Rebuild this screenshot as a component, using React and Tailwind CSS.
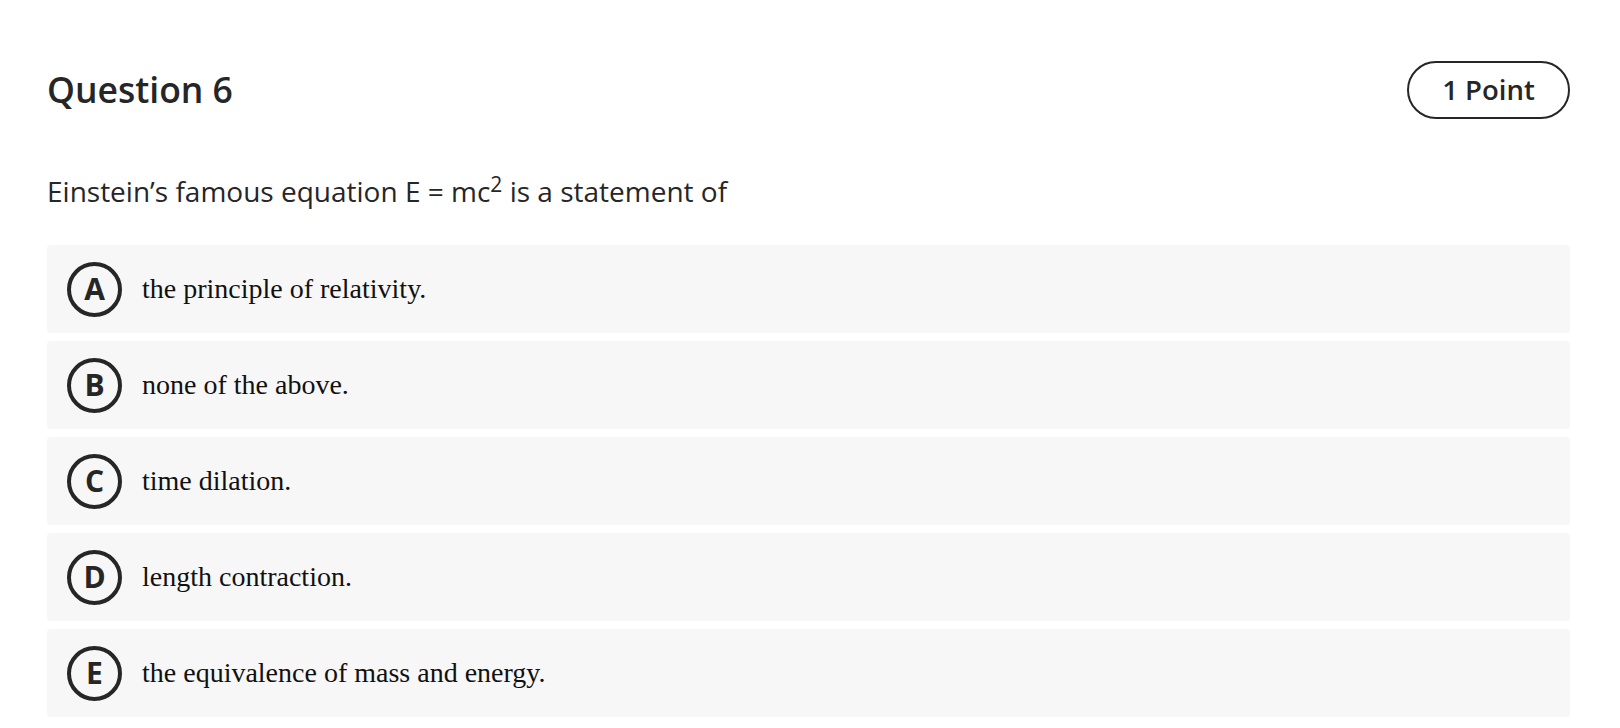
import React from 'react';

const options = [
  { letter: 'A', text: 'the principle of relativity.' },
  { letter: 'B', text: 'none of the above.' },
  { letter: 'C', text: 'time dilation.' },
  { letter: 'D', text: 'length contraction.' },
  { letter: 'E', text: 'the equivalence of mass and energy.' },
];

function OptionRow({ letter, text }) {
  return (
    <div className="flex items-center h-[88px] pl-[20px] bg-[#f7f7f7] rounded-[4px]">
      <div className="w-[55px] h-[55px] shrink-0 rounded-full border-[4px] border-[#262626] flex items-center justify-center font-['Open_Sans',sans-serif] font-bold text-[30px] leading-none text-[#262626]">
        {letter}
      </div>
      <span className="ml-[20px] font-['Liberation_Serif',serif] text-[28px] text-[#111]">{text}</span>
    </div>
  );
}

export default function App() {
  return (
    <div className="min-h-screen bg-white pl-[47px] pr-[50px] pt-[61px] font-['Open_Sans',sans-serif] text-[#262626]">
      {/* header */}
      <div className="flex items-center justify-between">
        <h2 className="text-[35.5px] font-semibold leading-none">Question 6</h2>
        <div className="h-[58px] w-[163px] rounded-full border-2 border-[#262626] flex items-center justify-center text-[27.5px] font-semibold">
          1 Point
        </div>
      </div>

      {/* question */}
      <p className="mt-[58px] text-[28px] leading-none">
        Einstein’s famous equation E = mc<sup className="text-[21px]">2</sup> is a statement of
      </p>

      {/* answers */}
      <div className="mt-[40px] flex flex-col gap-[8px]">
        {options.map((o) => (
          <OptionRow key={o.letter} letter={o.letter} text={o.text} />
        ))}
      </div>
    </div>
  );
}
